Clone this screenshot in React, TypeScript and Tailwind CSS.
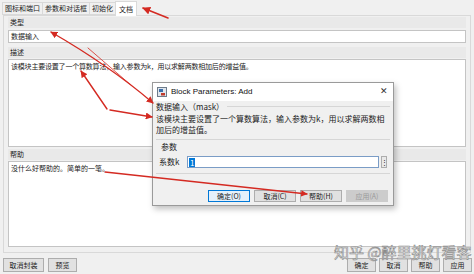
import React from "react";

const tabs = ["图标和端口", "参数和对话框", "初始化", "文档"];

const Band: React.FC<{ label: string; className?: string }> = ({ label, className = "" }) => (
  <div className={`flex h-[11px] items-center bg-[#e9e9e9] pl-[2px] leading-none ${className}`}>{label}</div>
);

const Btn: React.FC<{ label: string; className?: string }> = ({ label, className = "" }) => (
  <div
    className={`flex h-[14px] items-center justify-center border border-[#adadad] bg-[#e1e1e1] leading-none ${className}`}
  >
    {label}
  </div>
);

const DlgBtn: React.FC<{ label: string; className?: string }> = ({ label, className = "" }) => (
  <div
    className={`flex h-[12px] w-[42px] items-center justify-center border leading-none ${className}`}
  >
    {label}
  </div>
);

const Arrows: React.FC = () => (
  <svg className="pointer-events-none absolute left-0 top-0" width="474" height="274" viewBox="0 0 474 274">
    <defs>
      <marker id="ah" viewBox="0 0 10 10" refX="9" refY="5" markerWidth="5" markerHeight="5" orient="auto-start-reverse">
        <path d="M0 0 L10 5 L0 10 z" fill="#d42a22" />
      </marker>
    </defs>
    <g stroke="#d42a22" fill="none" strokeLinecap="round">
      <path d="M168 18 L143 8" strokeWidth="1.6" markerEnd="url(#ah)" />
      <path d="M51 32 Q110 66 153 103" strokeWidth="1.4" markerStart="url(#ah)" markerEnd="url(#ah)" />
      <path d="M88 48 L132 86" strokeWidth="0.8" />
      <path d="M107 109 L81 71" strokeWidth="1.4" markerEnd="url(#ah)" />
      <path d="M110 110 L152 117" strokeWidth="1.4" markerEnd="url(#ah)" />
      <path d="M105 172 L307 194" strokeWidth="1.3" markerEnd="url(#ah)" />
    </g>
  </svg>
);

const Dialog: React.FC = () => (
  <div className="absolute left-[152px] top-[82px] flex h-[124px] w-[242px] flex-col border border-[#9a9a9a] bg-[#f0f0f0] shadow-[2px_3px_6px_rgba(0,0,0,0.25)]">
    <div className="flex h-[18px] items-center bg-white pl-[4px] pr-[5px]">
      <svg width="10" height="10" viewBox="0 0 10 10">
        <rect x="0.5" y="0.5" width="9" height="9" fill="#dfe6ee" stroke="#6d7b8a" />
        <rect x="2" y="2" width="4" height="3" fill="#3c6ea8" />
        <path d="M4 6 L8 6 L8 8.5 L4 8.5 z" fill="#c0392b" />
      </svg>
      <span className="ml-[4px] font-['Liberation_Sans',sans-serif] text-[8px] text-[#111]">Block Parameters: Add</span>
      <span className="ml-auto font-['Liberation_Sans',sans-serif] text-[9px] text-[#333]">✕</span>
    </div>
    <div className="flex flex-col px-[3px] font-['Noto_Sans_CJK_SC',serif] text-[8px] text-[#222]">
      <div className="mt-[1px] flex h-[9px] items-center leading-none">
        <span>数据输入（mask）</span>
        <div className="ml-[3px] h-px flex-1 bg-[#d6d6d6]" />
      </div>
      <div className="mt-[2px] leading-[11px]">
        该模块主要设置了一个算数算法，输入参数为k，用以求解两数相
        <br />
        加后的增益值。
      </div>
      <div className="mt-[4px] h-px bg-[#d6d6d6]" />
      <div className="mt-[2px] flex h-[9px] items-center pl-[5px] leading-none">
        <span>参数</span>
      </div>
      <div className="mt-[5px] flex h-[12px] items-center pl-[3px]">
        <span className="w-[28px] leading-none">系数k</span>
        <div className="flex h-[12px] flex-1 items-center border border-[#7a9cc6] bg-white pl-[1px]">
          <span className="bg-[#0078d7] px-[1px] text-[8px] leading-[9px] text-white">1</span>
        </div>
        <div className="ml-[2px] flex h-[12px] w-[6px] items-center justify-center border border-[#adadad] bg-[#e9e9e9] text-[7px] leading-none">
          ⋮
        </div>
        <div className="w-[3px]" />
      </div>
      <div className="mt-[5px] h-px bg-[#d6d6d6]" />
      <div className="mt-[16px] flex items-center justify-end gap-[4px] pr-[2px] text-[7px]">
        <DlgBtn label="确定(O)" className="border-[#0078d7] bg-[#e5f1fb]" />
        <DlgBtn label="取消(C)" className="border-[#adadad] bg-[#e1e1e1]" />
        <DlgBtn label="帮助(H)" className="border-[#adadad] bg-[#e1e1e1]" />
        <DlgBtn label="应用(A)" className="w-[36px] border-[#cccccc] bg-[#cccccc] text-[#9a9a9a]" />
      </div>
    </div>
  </div>
);

export default function App() {
  return (
    <div className="relative h-[274px] w-[474px] overflow-hidden bg-[#f0f0f0] font-['Noto_Sans_CJK_SC',sans-serif] text-[7px] text-[#222]">
      <div className="flex h-[15px] items-end pl-[2px]">
        {tabs.map((t, i) =>
          i === 3 ? (
            <div key={t} className="relative -mb-px flex h-[15px] items-center border border-b-0 border-[#d9d9d9] bg-white px-[3px] leading-none">
              {t}
            </div>
          ) : (
            <div key={t} className="flex h-[13px] items-center border border-r-0 border-[#d9d9d9] bg-[#f0f0f0] px-[2px] leading-none">
              {t}
            </div>
          )
        )}
      </div>
      <div className="ml-[3px] flex h-[238px] w-[468px] flex-col border border-[#d9d9d9] px-[4px]">
        <Band label="类型" className="mt-[1px]" />
        <div className="mt-[2px] flex h-[13px] items-center border border-[#c4c4c4] bg-white pl-[2px] leading-none">
          数据输入
        </div>
        <Band label="描述" className="mt-[4px]" />
        <div className="mt-[1px] h-[88px] border border-[#c4c4c4] bg-white pl-[2px] pt-[2px] leading-[9px] tracking-[-0.2px]">
          该模块主要设置了一个算数算法，输入参数为k，用以求解两数相加后的增益值。
        </div>
        <Band label="帮助" className="mt-[2px]" />
        <div className="mt-[1px] h-[86px] border border-[#c4c4c4] bg-white pl-[2px] pt-[2px] leading-[9px]">
          没什么好帮助的。简单的一笔。
        </div>
      </div>
      <div className="mt-[5px] flex items-center justify-between pl-[3px] pr-[2px]">
        <div className="flex gap-[4px]">
          <Btn label="取消封装" className="w-[41px]" />
          <Btn label="预览" className="w-[29px]" />
        </div>
        <div className="flex gap-[3px]">
          <Btn label="确定" className="w-[29px]" />
          <Btn label="取消" className="w-[29px]" />
          <Btn label="帮助" className="w-[29px]" />
          <Btn label="应用" className="w-[29px]" />
        </div>
      </div>
      <Dialog />
      <Arrows />
      <div className="pointer-events-none absolute left-[334px] top-[244px] whitespace-nowrap text-[15px] leading-none text-white/80 [-webkit-text-stroke:0.6px_#8a8a8a]">
        知乎 @醉里挑灯看客
      </div>
    </div>
  );
}
